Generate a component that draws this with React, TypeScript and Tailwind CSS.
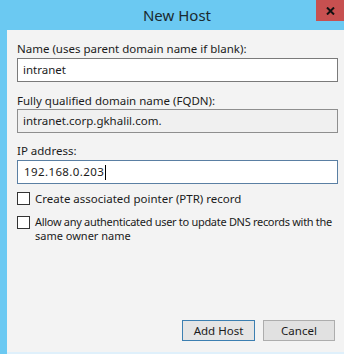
export default function App() {
  return (
    <div
      className="w-[344px] h-[354px] overflow-hidden bg-[#6bc9f2] flex flex-col text-[11.5px] text-[#1b1b1b]"
      style={{ fontFamily: '"Noto Sans", "Open Sans", sans-serif' }}
    >
      <div className="relative h-[30px] shrink-0 flex items-center justify-center">
        <span className="text-[15px] text-[#1a2a30] ml-[10px]">New Host</span>
        <div className="absolute right-0 top-0 w-[28px] h-[21px] bg-[#c75050] flex items-center justify-center">
          <svg width="9" height="8" viewBox="0 0 9 8">
            <path d="M1 0.5 L8 7.5 M8 0.5 L1 7.5" stroke="#111" strokeWidth="2" />
          </svg>
        </div>
      </div>

      <div className="ml-[7px] h-[322px] shrink-0 bg-[#f3f3f3] pl-[10px] pr-[6px] pt-[11px] flex flex-col">
        <div className="leading-[16px]">Name (uses parent domain name if blank):</div>
        <div className="mt-[1px] h-[24px] border border-[#7a7a7a] bg-white flex items-center px-[5px]">intranet</div>

        <div className="mt-[11px] leading-[16px]">Fully qualified domain name (FQDN):</div>
        <div className="mt-[0px] h-[24px] border border-[#8e8e8e] bg-[#f0f0f0] flex items-center px-[5px]">
          intranet.corp.gkhalil.com.
        </div>

        <div className="mt-[10px] leading-[16px]">IP address:</div>
        <div className="mt-[1px] h-[24px] border border-[#5a7fa3] bg-white flex items-center px-[6px]">
          <span className="tracking-[0.4px]">192.168.0.203</span>
          <span className="w-px h-[15px] bg-black ml-px" />
        </div>

        <div className="mt-[8px] flex items-start gap-[5px]">
          <div className="w-[13px] h-[13px] border border-[#333] bg-white shrink-0" />
          <span className="leading-[13px]">Create associated pointer (PTR) record</span>
        </div>
        <div className="mt-[11px] flex items-start gap-[5px]">
          <div className="w-[13px] h-[13px] border border-[#333] bg-white shrink-0" />
          <div className="flex flex-col leading-[14px] text-[11px] -mt-px">
            <span className="whitespace-nowrap tracking-[-0.3px]">
              Allow any authenticated user to update DNS records with the
            </span>
            <span>same owner name</span>
          </div>
        </div>

        <div className="mt-auto mb-[11px] flex justify-end gap-[8px] pr-[3px]">
          <div className="w-[73px] h-[21px] border border-[#3c7fb1] bg-[#e5e5e5] flex items-center justify-center">
            Add Host
          </div>
          <div className="w-[72px] h-[21px] border border-[#adadad] bg-[#e1e1e1] flex items-center justify-center">
            Cancel
          </div>
        </div>
      </div>
      <div className="ml-[7px] flex-1 bg-[#dff0fb]" />
    </div>
  );
}
